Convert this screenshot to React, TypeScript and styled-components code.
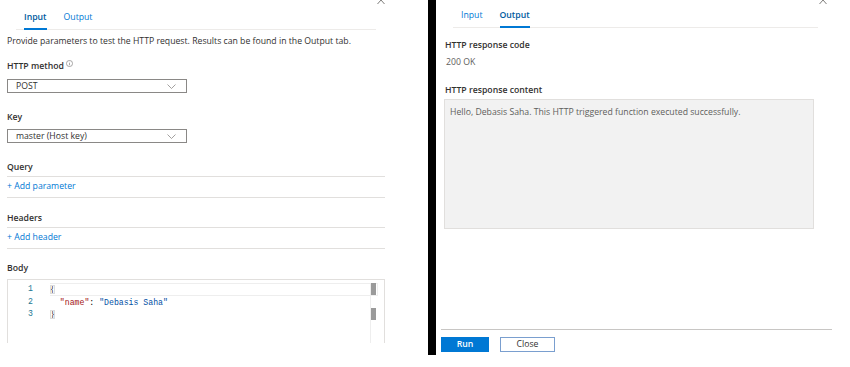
import styled, { createGlobalStyle } from "styled-components"

const GlobalStyle = createGlobalStyle`
  html, body {
    margin: 0;
    padding: 0;
    background: #fff;
  }
  body {
    font-family: "Open Sans", "Noto Sans", sans-serif;
    font-size: 8.7px;
    color: #323130;
  }
  * { box-sizing: border-box; }
`

const Page = styled.div`
  display: flex;
  align-items: flex-start;
  width: 850px;
  height: 367px;
  overflow: hidden;
`

const LeftPane = styled.section`
  width: 385px;
  height: 343px;
  padding-left: 7px;
  display: flex;
  flex-direction: column;
  overflow: hidden;
`

const RightPane = styled.section`
  width: 414px;
  height: 355px;
  padding-left: 5px;
  display: flex;
  flex-direction: column;
`

const Splitter = styled.div`
  width: 8px;
  height: 355px;
  margin-left: 43px;
  background: #000;
`

const Header = styled.div`
  display: flex;
  align-items: flex-start;
`

const TabBar = styled.div<{ $h: number; $left: number; $w: number }>`
  display: flex;
  align-items: flex-end;
  gap: 17px;
  height: ${p => p.$h}px;
  margin-left: ${p => p.$left}px;
  width: ${p => p.$w}px;
  padding-left: 8px;
  border-bottom: 1px solid #edebe9;
`

const Tab = styled.div<{ $active?: boolean }>`
  line-height: 14px;
  padding-bottom: 4px;
  margin-bottom: -1px;
  border-bottom: 2px solid ${p => (p.$active ? "#0078d4" : "transparent")};
  color: ${p => (p.$active ? "#005a9e" : "#0078d4")};
  font-weight: ${p => (p.$active ? 600 : 400)};
`

const CloseX = styled.svg`
  margin-top: -5px;
  margin-left: 1px;
  flex: none;
`

const Text = styled.div<{ $top?: number }>`
  line-height: 14px;
  margin-top: ${p => p.$top ?? 0}px;
`

const Label = styled.div<{ $top?: number }>`
  line-height: 14px;
  font-weight: 600;
  margin-top: ${p => p.$top ?? 0}px;
  display: flex;
  align-items: flex-start;
`

const InfoIcon = styled.svg`
  margin-left: 2px;
  margin-top: 1px;
`

const Select = styled.div<{ $top?: number }>`
  width: 180px;
  height: 14px;
  margin-top: ${p => p.$top ?? 0}px;
  border: 1px solid #8a8886;
  padding: 0 10px 0 8px;
  display: flex;
  align-items: center;
  justify-content: space-between;
  line-height: 12px;
`

const SectionHead = styled.div<{ $top: number; $plain?: boolean }>`
  margin-top: ${p => p.$top}px;
  line-height: 14px;
  font-weight: 600;
  padding-bottom: ${p => (p.$plain ? 0 : 2)}px;
  border-bottom: ${p => (p.$plain ? "none" : "1px solid #e1dfdd")};
`

const LinkRow = styled.div`
  margin-top: 2px;
  line-height: 14px;
  padding-bottom: 4px;
  color: #0078d4;
  border-bottom: 1px solid #e1dfdd;
`

const Editor = styled.div`
  position: relative;
  margin-top: 4px;
  flex: 1;
  display: flex;
  padding-top: 3px;
  border: 1px solid #e1dfdd;
  border-bottom: none;
  font-family: "Liberation Mono", "DejaVu Sans Mono", monospace;
  font-size: 8.2px;
`

const Gutter = styled.div`
  width: 42px;
  padding-right: 17px;
  text-align: right;
  color: #237893;
`

const Code = styled.div`
  flex: 1;
  padding-right: 6px;
`

const Line = styled.div<{ $current?: boolean }>`
  height: 12.5px;
  line-height: 11px;
  white-space: pre;
  color: #000;
  border: 1px solid ${p => (p.$current ? "#eeeeee" : "transparent")};
  border-left: none;
`

const Num = styled.div`
  height: 12.5px;
  line-height: 12px;
`

const Bracket = styled.span`
  outline: 1px solid #dcdcdc;
  outline-offset: -1px;
  color: #333;
`

const Key = styled.span`
  color: #a31515;
`

const Str = styled.span`
  color: #0451a5;
`

const Ruler = styled.div`
  position: absolute;
  top: 3px;
  bottom: 0;
  right: 7px;
  width: 7px;
  border-left: 1px solid #eeeeee;
  display: flex;
  flex-direction: column;
  gap: 13px;
`

const Thumb = styled.div`
  width: 5px;
  height: 12px;
  background: #9a9a9a;
`

const Content = styled.div`
  padding-left: 4px;
  display: flex;
  flex-direction: column;
`

const Value = styled.div`
  margin-top: 3px;
  padding-left: 1px;
  line-height: 14px;
  color: #605e5c;
`

const ResponseBox = styled.div`
  margin-top: 2px;
  margin-left: -1px;
  width: 370px;
  height: 130px;
  padding: 5px 5px;
  line-height: 14px;
  background: #f2f2f2;
  border: 1px solid #e1dfdd;
  color: #605e5c;
`

const Footer = styled.div`
  margin-top: auto;
  width: 391px;
  padding: 7px 0 3px;
  border-top: 1px solid #c8c6c4;
  display: flex;
  gap: 11px;
`

const Button = styled.button<{ $primary?: boolean; $w: number }>`
  width: ${p => p.$w}px;
  height: 15px;
  padding: 0;
  font: inherit;
  font-weight: ${p => (p.$primary ? 600 : 400)};
  line-height: 13px;
  color: ${p => (p.$primary ? "#fff" : "#323130")};
  background: ${p => (p.$primary ? "#0078d4" : "#fff")};
  border: 1px solid ${p => (p.$primary ? "#0078d4" : "#7a9fcf")};
`

function Chevron() {
  return (
    <svg width="9" height="5" viewBox="0 0 9 5">
      <polyline points="0.5,0.5 4.5,4.5 8.5,0.5" fill="none" stroke="#8a8886" strokeWidth="0.8" />
    </svg>
  )
}

function Cross() {
  return (
    <CloseX width="8" height="10" viewBox="0 0 8 10">
      <path d="M0.5 1 L7.5 9 M7.5 1 L0.5 9" stroke="#605e5c" strokeWidth="0.8" fill="none" />
    </CloseX>
  )
}

export default function App() {
  return (
    <Page>
      <GlobalStyle />
      <LeftPane>
        <Header>
          <TabBar $h={30} $left={9} $w={366}>
            <Tab $active>Input</Tab>
            <Tab>Output</Tab>
          </TabBar>
          <Cross />
        </Header>
        <Text $top={4}>Provide parameters to test the HTTP request. Results can be found in the Output tab.</Text>
        <Label $top={11}>
          HTTP method
          <InfoIcon width="7" height="7" viewBox="0 0 8 8">
            <circle cx="4" cy="4" r="3.5" fill="none" stroke="#605e5c" strokeWidth="0.6" />
            <line x1="4" y1="3.4" x2="4" y2="6" stroke="#605e5c" strokeWidth="0.6" />
            <circle cx="4" cy="2.3" r="0.4" fill="#605e5c" />
          </InfoIcon>
        </Label>
        <Select $top={6}>
          <span>POST</span>
          <Chevron />
        </Select>
        <Label $top={17}>Key</Label>
        <Select $top={5}>
          <span>master (Host key)</span>
          <Chevron />
        </Select>
        <SectionHead $top={17}>Query</SectionHead>
        <LinkRow>+ Add parameter</LinkRow>
        <SectionHead $top={13}>Headers</SectionHead>
        <LinkRow>+ Add header</LinkRow>
        <SectionHead $top={12} $plain>Body</SectionHead>
        <Editor>
          <Gutter>
            <Num>1</Num>
            <Num>2</Num>
            <Num>3</Num>
          </Gutter>
          <Code>
            <Line $current><Bracket>{"{"}</Bracket></Line>
            <Line>  <Key>"name"</Key>: <Str>"Debasis Saha"</Str></Line>
            <Line><Bracket>{"}"}</Bracket></Line>
          </Code>
          <Ruler>
            <Thumb />
            <Thumb />
          </Ruler>
        </Editor>
      </LeftPane>
      <Splitter />
      <RightPane>
        <Header>
          <TabBar $h={28} $left={12} $w={365}>
            <Tab>Input</Tab>
            <Tab $active>Output</Tab>
          </TabBar>
          <Cross />
        </Header>
        <Content>
          <Label $top={10}>HTTP response code</Label>
          <Value>200 OK</Value>
          <Label $top={14}>HTTP response content</Label>
          <ResponseBox>Hello, Debasis Saha. This HTTP triggered function executed successfully.</ResponseBox>
        </Content>
        <Footer>
          <Button $primary $w={48}>Run</Button>
          <Button $w={55}>Close</Button>
        </Footer>
      </RightPane>
    </Page>
  )
}
